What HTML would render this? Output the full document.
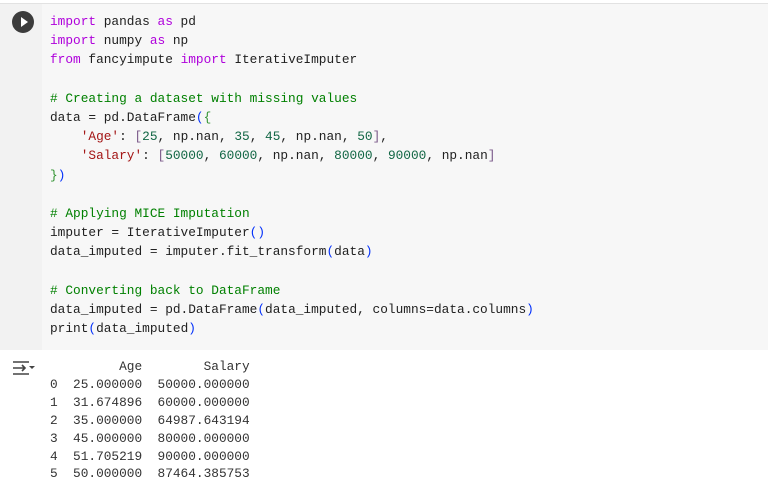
<!DOCTYPE html>
<html><head><meta charset="utf-8"><style>
body{margin:0;width:768px;height:489px;background:#fff;overflow:hidden;font-family:"Liberation Mono",monospace;}
.cell{position:absolute;left:0;top:3px;width:768px;height:346px;background:#f2f2f2;border-top:1px solid #e2e2e2;}
.code{position:absolute;left:42px;top:4px;width:726px;height:346px;background:#f7f7f7;}
pre{margin:0;font-family:"Liberation Mono",monospace;font-size:12.8px;color:#212121;}
.src{position:absolute;left:50px;top:12px;line-height:19.2px;}
.out{position:absolute;left:50px;top:358px;line-height:17.9px;color:#333;}
.k{color:#af00db}.c{color:#008000}.s{color:#a31515}.n{color:#116644}.p1{color:#0431fa}.p2{color:#319331}.p3{color:#7b5a8a}
.run{position:absolute;left:12px;top:11px;width:22px;height:22px;border-radius:50%;background:#3c3c3c;}
.run:after{content:"";position:absolute;left:8.5px;top:6px;border-left:7.5px solid #fff;border-top:5px solid transparent;border-bottom:5px solid transparent;}
</style></head><body>
<div class="cell"></div><div class="code"></div>
<div class="run"></div>
<pre class="src"><span class="k">import</span> pandas <span class="k">as</span> pd
<span class="k">import</span> numpy <span class="k">as</span> np
<span class="k">from</span> fancyimpute <span class="k">import</span> IterativeImputer

<span class="c"># Creating a dataset with missing values</span>
data = pd.DataFrame<span class="p1">(</span><span class="p2">{</span>
    <span class="s">'Age'</span>: <span class="p3">[</span><span class="n">25</span>, np.nan, <span class="n">35</span>, <span class="n">45</span>, np.nan, <span class="n">50</span><span class="p3">]</span>,
    <span class="s">'Salary'</span>: <span class="p3">[</span><span class="n">50000</span>, <span class="n">60000</span>, np.nan, <span class="n">80000</span>, <span class="n">90000</span>, np.nan<span class="p3">]</span>
<span class="p2">}</span><span class="p1">)</span>

<span class="c"># Applying MICE Imputation</span>
imputer = IterativeImputer<span class="p1">()</span>
data_imputed = imputer.fit_transform<span class="p1">(</span>data<span class="p1">)</span>

<span class="c"># Converting back to DataFrame</span>
data_imputed = pd.DataFrame<span class="p1">(</span>data_imputed, columns=data.columns<span class="p1">)</span>
print<span class="p1">(</span>data_imputed<span class="p1">)</span></pre>
<svg style="position:absolute;left:12px;top:360px" width="24" height="16" viewBox="0 0 24 16"><g stroke="#444" stroke-width="1.6" fill="none"><path d="M1 2H17M1 14H17M1 8H13M10 5L13 8L10 11"/></g><path d="M17 6H23L20 9Z" fill="#444"/></svg>
<pre class="out">         Age        Salary
0  25.000000  50000.000000
1  31.674896  60000.000000
2  35.000000  64987.643194
3  45.000000  80000.000000
4  51.705219  90000.000000
5  50.000000  87464.385753</pre>
</body></html>
